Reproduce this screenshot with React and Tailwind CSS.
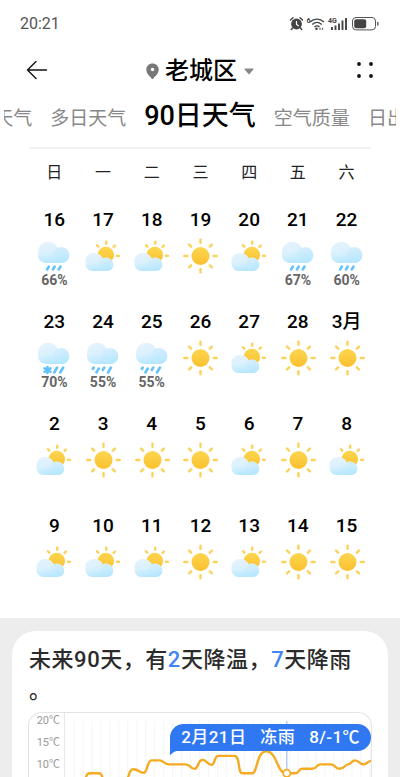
import React from 'react';

const weekdays = ['日', '一', '二', '三', '四', '五', '六'];

const weeks = [
  [
    { day: '16', icon: 'rain', chance: '66%' },
    { day: '17', icon: 'partly' },
    { day: '18', icon: 'partly' },
    { day: '19', icon: 'sun' },
    { day: '20', icon: 'partly' },
    { day: '21', icon: 'rain', chance: '67%' },
    { day: '22', icon: 'rain', chance: '60%' },
  ],
  [
    { day: '23', icon: 'sleet', chance: '70%' },
    { day: '24', icon: 'heavy', chance: '55%' },
    { day: '25', icon: 'heavy', chance: '55%' },
    { day: '26', icon: 'sun' },
    { day: '27', icon: 'partly' },
    { day: '28', icon: 'sun' },
    { day: '3月', icon: 'sun' },
  ],
  [
    { day: '2', icon: 'partly' },
    { day: '3', icon: 'sun' },
    { day: '4', icon: 'sun' },
    { day: '5', icon: 'sun' },
    { day: '6', icon: 'partly' },
    { day: '7', icon: 'sun' },
    { day: '8', icon: 'partly' },
  ],
  [
    { day: '9', icon: 'partly' },
    { day: '10', icon: 'partly' },
    { day: '11', icon: 'partly' },
    { day: '12', icon: 'sun' },
    { day: '13', icon: 'partly' },
    { day: '14', icon: 'sun' },
    { day: '15', icon: 'sun' },
  ],
];

const gridLines = Array.from({ length: 34 }, (_, i) => 9 + i * 9);

function Gradients() {
  return (
    <svg width="0" height="0" className="absolute" aria-hidden="true">
      <defs>
        <linearGradient id="sunFill" x1="0" y1="0" x2="0" y2="1">
          <stop offset="0" stopColor="#fcd650" />
          <stop offset="1" stopColor="#fbc02e" />
        </linearGradient>
        <linearGradient id="cloudFill" x1="0.2" y1="0" x2="0.5" y2="1">
          <stop offset="0" stopColor="#e6f2fc" />
          <stop offset="0.5" stopColor="#daf1fd" />
          <stop offset="1" stopColor="#b4e6fe" />
        </linearGradient>
        <linearGradient id="puffFill" x1="0" y1="0" x2="0.3" y2="1">
          <stop offset="0" stopColor="#cdeafd" />
          <stop offset="1" stopColor="#bbe9fe" />
        </linearGradient>
      </defs>
    </svg>
  );
}

function Sun({ cx, cy, r, inner, outer, angles }) {
  return (
    <g>
      <circle cx={cx} cy={cy} r={r} fill="url(#sunFill)" />
      {angles.map((a) => {
        const rad = (a * Math.PI) / 180;
        return (
          <line
            key={a}
            x1={cx + Math.cos(rad) * inner}
            y1={cy + Math.sin(rad) * inner}
            x2={cx + Math.cos(rad) * outer}
            y2={cy + Math.sin(rad) * outer}
            stroke="#fcd25c"
            strokeWidth="2.400"
            strokeLinecap="round"
          />
        );
      })}
    </g>
  );
}

function RainCloud() {
  return (
    <g>
      <path
        d="M12 28C7.500 28 4 24.500 4 20.300C4 16.600 4 15.500 4.400 14.500C5.600 9.800 9.500 6.700 14.200 6.700C18.600 6.700 22 9 23.800 12.800C29.500 10.500 35.300 14.500 35.300 20.200C35.300 24.600 31.800 28 27.500 28Z"
        fill="url(#cloudFill)"
      />
      <circle cx="27.300" cy="20" r="8" fill="url(#puffFill)" opacity="0.55" />
    </g>
  );
}

function Drops({ lines }) {
  return lines.map(([x, top, bottom]) => (
    <line
      key={x}
      x1={x + (bottom - top) * 0.3}
      y1={top}
      x2={x - (bottom - top) * 0.3}
      y2={bottom}
      stroke="#66c3f8"
      strokeWidth="2.600"
      strokeLinecap="round"
    />
  ));
}

function WeatherIcon({ type }) {
  return (
    <svg viewBox="0 0 40 38" className="mx-auto mt-[2px] block h-[38px] w-10 overflow-visible" aria-hidden="true">
      {type === 'sun' && (
        <Sun cx={20.5} cy={21} r={9} inner={13.2} outer={16.2} angles={[0, 45, 90, 135, 180, 225, 270, 315]} />
      )}
      {type === 'partly' && (
        <>
          <Sun cx={22.8} cy={20} r={8.3} inner={11.2} outer={13.2} angles={[-132, -88, -46, 4]} />
          <path
            d="M9.500 36C5.500 36 2.500 32.800 2.500 28.800C2.500 24.500 2.500 24 3.200 22.600C4.600 19.700 7.600 18 11 18C15 18 18.400 20 19.600 23.200C24.700 21 30.300 24.600 30.300 29.800C30.300 33.400 27.400 36 24 36Z"
            fill="url(#cloudFill)"
          />
          <circle cx="23.300" cy="29.200" r="6.800" fill="url(#puffFill)" opacity="0.45" />
        </>
      )}
      {type === 'rain' && (
        <>
          <RainCloud />
          <Drops lines={[[14, 31.5, 34.5], [19.8, 31.5, 34.5], [25.6, 31.5, 34.5]]} />
        </>
      )}
      {type === 'heavy' && (
        <g transform="translate(0 -1)">
          <RainCloud />
          <Drops lines={[[10.3, 31.5, 33], [14.6, 32.5, 36.5], [20.5, 31.5, 34], [26.5, 31.5, 36.5]]} />
        </g>
      )}
      {type === 'sleet' && (
        <g transform="translate(0 -1)">
          <RainCloud />
          <path d="M13.500 31V37M10.500 32.400L16.500 35.600M16.500 32.400L10.500 35.600" stroke="#5fc0f8" strokeWidth="2.500" strokeLinecap="round" />
          <Drops lines={[[21.7, 31.5, 36.5], [27.7, 31.5, 36.5]]} />
        </g>
      )}
    </svg>
  );
}

function StatusBar() {
  return (
    <div className="flex h-[46px] items-center justify-between pl-5 pr-[21px] pt-px text-[16px] text-[#555]">
      <span>20:21</span>
      <svg width="90" height="16" viewBox="0 0 90 16" aria-label="闹钟 Wi-Fi 4G 电量" fill="none">
        <circle cx="7.500" cy="8" r="5.400" fill="#444" />
        <path d="M1.500 4L4 1.800M11 1.800L13.500 4M3.500 12L2.300 13.500M11.500 12L12.700 13.500" stroke="#444" strokeWidth="1.500" strokeLinecap="round" />
        <path d="M7.500 5V8.500L9.800 10" stroke="#fff" strokeWidth="1.200" />
        <text x="17.500" y="7" fontSize="7" fontWeight="700" fill="#444">6</text>
        <path d="M21 6C25.200 2.200 30.800 2.200 35 6M23.300 8.500C26.200 5.900 29.800 5.900 32.700 8.500M25.500 10.900C27.200 9.500 28.800 9.500 30.500 10.900" stroke="#444" strokeWidth="1.400" />
        <circle cx="27.500" cy="12.800" r="1.300" fill="#444" />
        <path d="M31 11.700V14M33.500 11.700V14" stroke="#777" strokeWidth="1.300" />
        <text x="39" y="7" fontSize="7" fontWeight="700" fill="#444">4G</text>
        <path d="M43 11V14M46.500 9.500V14M50 7.500V14M53.500 4.500V14M57 2V14" stroke="#444" strokeWidth="1.900" />
        <rect x="63.500" y="1.500" width="23" height="12.400" rx="3.500" stroke="#555" strokeWidth="1" />
        <rect x="65.200" y="3.200" width="12" height="9" rx="2" fill="#444" />
        <path d="M88.800 6V9.500" stroke="#555" strokeWidth="1.400" />
      </svg>
    </div>
  );
}

function Header() {
  return (
    <header className="flex h-12 items-center justify-between px-[26px]">
      <button aria-label="返回">
        <svg width="22" height="20" viewBox="0 0 22 20" fill="none" stroke="#111" strokeWidth="1.400" strokeLinecap="round" strokeLinejoin="round">
          <path d="M10 1.500L1.500 10L10 18.500M1.500 10H20.500" />
        </svg>
      </button>
      <button className="flex items-center pr-1 pt-[2px] text-[24px] font-medium leading-8 text-black">
        <svg width="13" height="17" viewBox="0 0 13 17" className="mr-[6px]">
          <path d="M6.500 0.500C3 0.500 0.300 3.200 0.300 6.600C0.300 11 4.300 13.500 5.700 15.700C6.100 16.200 6.900 16.200 7.300 15.700C8.700 13.500 12.700 11 12.700 6.600C12.700 3.200 10 0.500 6.500 0.500Z" fill="#777" />
          <circle cx="6.500" cy="6.500" r="1.800" fill="#fff" />
        </svg>
        老城区
        <svg width="10" height="7" viewBox="0 0 10 7" className="ml-[7px]">
          <path d="M1 0.500H9C9.600 0.500 9.700 1 9.400 1.400L5.500 6C5.200 6.400 4.800 6.400 4.500 6L0.600 1.400C0.300 1 0.400 0.500 1 0.500Z" fill="#888" />
        </svg>
      </button>
      <button aria-label="更多">
        <svg width="18" height="18" viewBox="0 0 18 18" fill="#111">
          <circle cx="3" cy="3" r="1.900" />
          <circle cx="15" cy="3" r="1.900" />
          <circle cx="3" cy="15" r="1.900" />
          <circle cx="15" cy="15" r="1.900" />
        </svg>
      </button>
    </header>
  );
}

function Tabs() {
  return (
    <nav className="mx-1 flex h-10 items-baseline justify-center gap-[18px] overflow-hidden whitespace-nowrap text-[19px] leading-[44px] text-[#888]">
      <button className="shrink-0">整点天气</button>
      <button className="shrink-0">多日天气</button>
      <button className="shrink-0 text-[27px] font-medium text-black">90日天气</button>
      <button className="shrink-0">空气质量</button>
      <button className="shrink-0">日出日落</button>
    </nav>
  );
}

function Calendar() {
  return (
    <div className="ml-[30px] mr-[29px] mt-[13px] border-t-2 border-[#f1f1f1] pb-[3px]">
      <table className="w-full table-fixed border-collapse text-center">
        <thead>
          <tr>
            {weekdays.map((d) => (
              <th key={d} className="h-[58px] p-0 pb-[10px] text-[16px] font-normal leading-6 text-[#222]">
                {d}
              </th>
            ))}
          </tr>
        </thead>
        <tbody>
          {weeks.map((week) => (
            <tr key={week[0].day}>
              {week.map((item) => (
                <td key={item.day} className="h-[102px] p-0 align-top">
                  <div className="text-[19px] font-medium leading-[26px] text-black">{item.day}</div>
                  <WeatherIcon type={item.icon} />
                  {item.chance && (
                    <div className="text-[14px] font-bold leading-[14px] text-[#666]">{item.chance}</div>
                  )}
                </td>
              ))}
            </tr>
          ))}
        </tbody>
      </table>
    </div>
  );
}

function TrendChart() {
  return (
    <div className="relative mt-[6px] flex rounded-t-[14px] border border-b-0 border-[#e4e4e4]">
      <div className="flex w-9 shrink-0 flex-col border-r border-[#e8e8e8] pr-1 text-right text-[11px] leading-[22px] text-[#999]">
        <span className="-mt-[3px]">20℃</span>
        <span>15℃</span>
        <span>10℃</span>
        <span>5℃</span>
      </div>
      <svg viewBox="0 0 307 100" className="w-full min-w-0" fill="none">
        {gridLines.map((x) => (
          <line key={x} x1={x} y1="8" x2={x} y2="100" stroke="#f5f5f5" />
        ))}
        <line x1="222.500" y1="8" x2="222.500" y2="100" stroke="#b9cdf5" strokeWidth="1.500" />
        <path
          d="M20 68C22 61 22 60.500 26 60.500H33C37 60.500 36 61 39 68C45 76 56 76 62 68C65 60 65 56.500 69 56.500C74 56.500 74 60 79 60C83 60 82 47.500 87 47.500H95C99 47.500 99 51.500 104 51.500H121C126 51.500 125 56 130 56C134 56 133 47 138 47C143 47 142 52 147 52C151 52 149 43 154 43H170C176 43 173 60.500 178 60.500H188C193 60.500 192 38.500 202 38.500C213 38.500 212 60.500 222.500 60.500H231C235 60.500 234 56 238 56H248C253 56 252 51.500 256 51.500H267C271 51.500 271 56 275 56C281 56 281 51.500 284 51.500C288 51.500 287 47.500 291 47.500C295 47.500 296 51.500 299 51.500C303 51.500 303 49 307 48"
          stroke="#f5aa22"
          strokeWidth="2.400"
          strokeLinecap="round"
        />
        <circle cx="222.500" cy="60.500" r="3.600" fill="#fff" stroke="#f5aa22" strokeWidth="1.800" />
      </svg>
      <div className="absolute right-0 top-[11px] whitespace-pre rounded-full rounded-bl-none bg-[#2f78f2] px-[11px] text-[17px] font-medium leading-[27px] tracking-wide text-white">
        2月21日{'   '}冻雨{'   '}8/-1℃
        <svg width="7" height="5" viewBox="0 0 7 5" className="absolute left-0 top-full">
          <path d="M0 0H7C4 0.500 2 2 0 4.500Z" fill="#2f78f2" />
        </svg>
      </div>
    </div>
  );
}

export default function App() {
  return (
    <div className="h-screen overflow-hidden bg-[#ededed] font-[Roboto,'Noto_Sans_CJK_SC',sans-serif]">
      <Gradients />
      <section className="bg-white">
        <StatusBar />
        <Header />
        <Tabs />
        <Calendar />
      </section>
      <section className="mx-3 mt-[13px] rounded-[24px] bg-white px-4 pt-[13px]">
        <h2 className="ml-px text-[22px] font-medium leading-[31px] tracking-wide text-[#2b2b2b] [line-break:anywhere]">
          未来90天，有<span className="text-[#4285f4]">2</span>天降温，<span className="text-[#4285f4]">7</span>天降雨。
        </h2>
        <TrendChart />
      </section>
    </div>
  );
}
